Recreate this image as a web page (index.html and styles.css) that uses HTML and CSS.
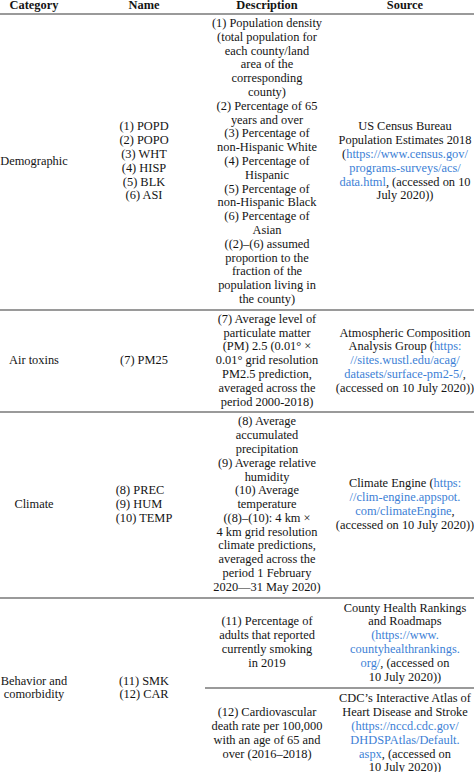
FILE: index.html
```html
<!DOCTYPE html>
<html lang="en">
<head>
<meta charset="utf-8">
<title>Variables table</title>
<link rel="stylesheet" href="styles.css">
</head>
<body>
<table class="tbl">
  <colgroup>
    <col class="c-cat">
    <col class="c-name">
    <col class="c-desc">
    <col class="c-src">
  </colgroup>
  <thead>
    <tr>
      <th>Category</th>
      <th>Name</th>
      <th>Description</th>
      <th>Source</th>
    </tr>
  </thead>
  <tbody>
    <tr class="row">
      <td>Demographic</td>
      <td>(1) POPD<br>(2) POPO<br>(3) WHT<br>(4) HISP<br>(5) BLK<br>(6) ASI</td>
      <td>(1) Population density<br>(total population for<br>each county/land<br>area of the<br>corresponding<br>county)<br>(2) Percentage of 65<br>years and over<br>(3) Percentage of<br>non-Hispanic White<br>(4) Percentage of<br>Hispanic<br>(5) Percentage of<br>non-Hispanic Black<br>(6) Percentage of<br>Asian<br>((2)–(6) assumed<br>proportion to the<br>fraction of the<br>population living in<br>the county)</td>
      <td>US Census Bureau<br>Population Estimates 2018<br>(<a class="lnk">https://www.census.gov/<br>programs-surveys/acs/<br>data.html</a>, (accessed on 10<br>July 2020))</td>
    </tr>
    <tr class="row">
      <td>Air toxins</td>
      <td>(7) PM25</td>
      <td>(7) Average level of<br>particulate matter<br>(PM) 2.5 (0.01° ×<br>0.01° grid resolution<br>PM2.5 prediction,<br>averaged across the<br>period 2000-2018)</td>
      <td>Atmospheric Composition<br>Analysis Group (<a class="lnk">https:<br>//sites.wustl.edu/acag/<br>datasets/surface-pm2-5/</a>,<br>(accessed on 10 July 2020))</td>
    </tr>
    <tr class="row">
      <td>Climate</td>
      <td><span class="left-block">(8) PREC<br>(9) HUM<br>(10) TEMP</span></td>
      <td>(8) Average<br>accumulated<br>precipitation<br>(9) Average relative<br>humidity<br>(10) Average<br>temperature<br>((8)–(10): 4 km ×<br>4 km grid resolution<br>climate predictions,<br>averaged across the<br>period 1 February<br>2020—31 May 2020)</td>
      <td>Climate Engine (<a class="lnk">https:<br>//clim-engine.appspot.<br>com/climateEngine</a>,<br>(accessed on 10 July 2020))</td>
    </tr>
    <tr class="row sub">
      <td rowspan="2" class="span">Behavior and<br>comorbidity</td>
      <td rowspan="2" class="span">(11) SMK<br>(12) CAR</td>
      <td>(11) Percentage of<br>adults that reported<br>currently smoking<br>in 2019</td>
      <td>County Health Rankings<br>and Roadmaps<br><a class="lnk">(https://www.<br>countyhealthrankings.<br>org/</a>, (accessed on<br>10 July 2020))</td>
    </tr>
    <tr class="row sub">
      <td>(12) Cardiovascular<br>death rate per 100,000<br>with an age of 65 and<br>over (2016–2018)</td>
      <td>CDC’s Interactive Atlas of<br>Heart Disease and Stroke<br><a class="lnk">(https://nccd.cdc.gov/<br>DHDSPAtlas/Default.<br>aspx</a>, (accessed on<br>10 July 2020))</td>
    </tr>
  </tbody>
</table>
</body>
</html>
```
FILE: styles.css
```css
html, body {
  margin: 0;
  padding: 0;
  overflow: hidden;
  background: #ffffff;
}

body {
  font-family: "Liberation Serif", "Times New Roman", serif;
  font-size: 12.4px;
  color: #141414;
}

.tbl {
  border-collapse: collapse;
  table-layout: fixed;
  width: 496px;
  margin: 0 0 0 -15px;
}

.c-cat { width: 98px; }
.c-name { width: 122px; }
.c-desc { width: 124px; }
.c-src { width: 152px; }

.tbl th,
.tbl td {
  text-align: center;
  vertical-align: middle;
  line-height: 13.8px;
  white-space: nowrap;
  padding: 2px 0;
}

.tbl th {
  font-weight: bold;
  line-height: 11px;
  padding: 0 0 2px;
  border-bottom: 2px solid #9a9a9a;
}

.row td {
  border-bottom: 2px solid #9a9a9a;
}

.sub td {
  padding: 3px 0;
}

.left-block {
  display: inline-block;
  text-align: left;
}

.lnk {
  color: #3d7fd6;
  text-decoration: none;
}
```
